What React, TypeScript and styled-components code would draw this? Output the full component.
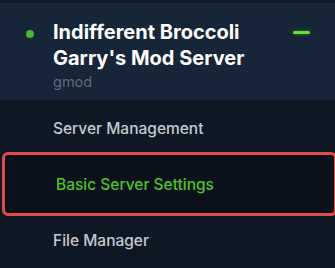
import styled, { createGlobalStyle } from "styled-components";

const GlobalStyle = createGlobalStyle`
  body {
    margin: 0;
    background: #0e1824;
    font-family: Inter, "Noto Sans", sans-serif;
  }
`;

const Sidebar = styled.aside`
  width: 335px;
  height: 268px;
  overflow: hidden;
  background: #0e1824;
`;

const TopStrip = styled.div`
  height: 3px;
  background: #101b28;
`;

const Header = styled.div`
  display: flex;
  align-items: flex-start;
  background: #162537;
  padding: 16px 25px 9px 26px;
`;

const StatusDot = styled.span`
  flex: none;
  width: 8px;
  height: 8px;
  border-radius: 50%;
  background: #4cb52c;
  margin-top: 11px;
  margin-right: 19px;
`;

const TitleBlock = styled.div`
  flex: 1;
  display: flex;
  flex-direction: column;
`;

const Title = styled.h1`
  margin: 0;
  font-size: 20px;
  line-height: 26px;
  font-weight: 700;
  color: #ffffff;
`;

const Subtitle = styled.span`
  margin-top: 2px;
  font-size: 14.5px;
  line-height: 18px;
  color: #5b6a7a;
`;

const CollapseButton = styled.button`
  flex: none;
  width: 17px;
  height: 3px;
  padding: 0;
  margin-top: 12px;
  border: none;
  border-radius: 2px;
  background: #62e22e;
  box-shadow: 0 0 4px rgba(98, 226, 46, 0.45);
  cursor: pointer;
`;

const Nav = styled.nav`
  display: flex;
  flex-direction: column;
  padding: 4px 0 0 2px;
`;

const NavItem = styled.a<{ $active?: boolean }>`
  display: flex;
  align-items: center;
  height: ${(p) => (p.$active ? "64px" : "48px")};
  box-sizing: border-box;
  padding-left: 51px;
  margin-right: ${(p) => (p.$active ? "-2px" : "0")};
  font-size: 15.5px;
  font-weight: 500;
  text-decoration: none;
  color: ${(p) => (p.$active ? "#4ac428" : "#c4c9d0")};
  background: ${(p) => (p.$active ? "#0a111a" : "transparent")};
  border: ${(p) => (p.$active ? "3px solid #e5474b" : "none")};
  border-radius: ${(p) => (p.$active ? "6px" : "0")};
`;

const items = [
  { label: "Server Management" },
  { label: "Basic Server Settings", active: true },
  { label: "File Manager" },
];

export default function App() {
  return (
    <>
      <GlobalStyle />
      <Sidebar>
        <TopStrip />
        <Header>
          <StatusDot />
          <TitleBlock>
            <Title>
              Indifferent Broccoli
              <br />
              Garry's Mod Server
            </Title>
            <Subtitle>gmod</Subtitle>
          </TitleBlock>
          <CollapseButton aria-label="Collapse" />
        </Header>
        <Nav>
          {items.map((item) => (
            <NavItem key={item.label} href="#" $active={item.active}>
              {item.label}
            </NavItem>
          ))}
        </Nav>
      </Sidebar>
    </>
  );
}
